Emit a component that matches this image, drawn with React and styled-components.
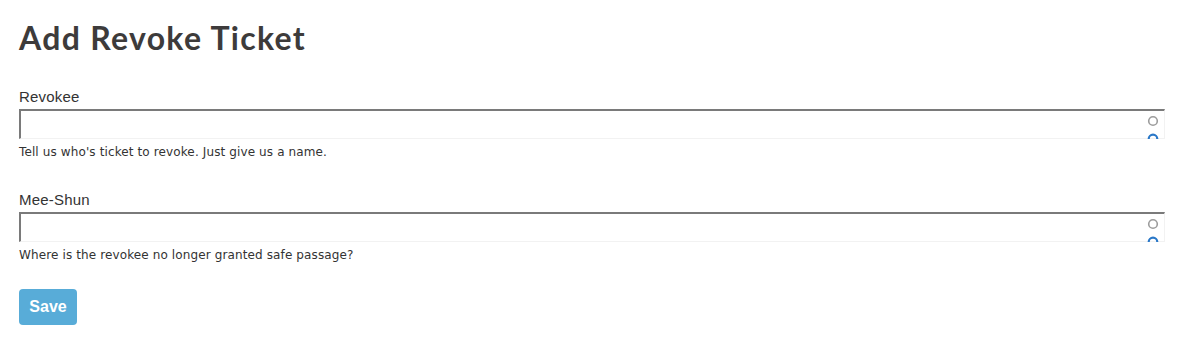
import styled, { createGlobalStyle } from "styled-components";

const GlobalStyle = createGlobalStyle`
  body {
    margin: 0;
    background: #fff;
    font-family: "Liberation Sans", Arial, sans-serif;
    color: #333;
  }
`;

const Page = styled.div`
  padding: 18px 20px 0 19px;
  width: 1146px;
`;

const Title = styled.h1`
  margin: 0 0 30px 0;
  font-family: "Lato", "Open Sans", sans-serif;
  font-weight: 700;
  font-size: 32px;
  line-height: 40px;
  letter-spacing: 1.3px;
  color: #3d3b3b;
`;

const Field = styled.div`
  display: flex;
  flex-direction: column;

  & + & {
    margin-top: 32px;
  }
`;

const Label = styled.label`
  font-size: 15px;
  line-height: 18px;
  letter-spacing: 0.2px;
  color: #333;
  margin-bottom: 3px;
`;

const InputWrap = styled.div`
  position: relative;
  height: 30px;
  overflow: hidden;
`;

const Input = styled.input`
  box-sizing: border-box;
  width: 100%;
  height: 30px;
  border-style: solid;
  border-width: 2px 1px 1px 2px;
  border-color: #7a7a7a #f2f2f2 #f2f2f2 #7a7a7a;
  padding: 0 8px;
  font-size: 14px;
  outline: none;
`;

const AutofillIcon = styled.svg`
  position: absolute;
  right: 5px;
  top: 0;
`;

const Help = styled.p`
  margin: 6px 0 0 0;
  font-family: "DejaVu Sans", Verdana, sans-serif;
  font-size: 12px;
  line-height: 14px;
  letter-spacing: 0.12px;
  color: #333;
`;

const Button = styled.button`
  width: 58px;
  height: 36px;
  margin-top: 27px;
  border: none;
  border-radius: 4px;
  background: #58acd8;
  color: #fff;
  font-family: "Liberation Sans", Arial, sans-serif;
  font-weight: 700;
  font-size: 16px;
  padding: 0;
`;

const FormField = ({ label, help }) => (
  <Field>
    <Label>{label}</Label>
    <InputWrap>
      <Input type="text" />
      <AutofillIcon width="14" height="30" viewBox="0 0 14 30">
        <circle cx="7" cy="12" r="4.3" fill="none" stroke="#9c9c9c" strokeWidth="1.6" />
        <circle cx="7" cy="30" r="4.3" fill="none" stroke="#2a78c8" strokeWidth="2.2" />
      </AutofillIcon>
    </InputWrap>
    <Help>{help}</Help>
  </Field>
);

const App = () => (
  <>
    <GlobalStyle />
    <Page>
      <Title>Add Revoke Ticket</Title>
      <FormField
        label="Revokee"
        help="Tell us who's ticket to revoke. Just give us a name."
      />
      <FormField
        label="Mee-Shun"
        help="Where is the revokee no longer granted safe passage?"
      />
      <Button>Save</Button>
    </Page>
  </>
);

export default App;
